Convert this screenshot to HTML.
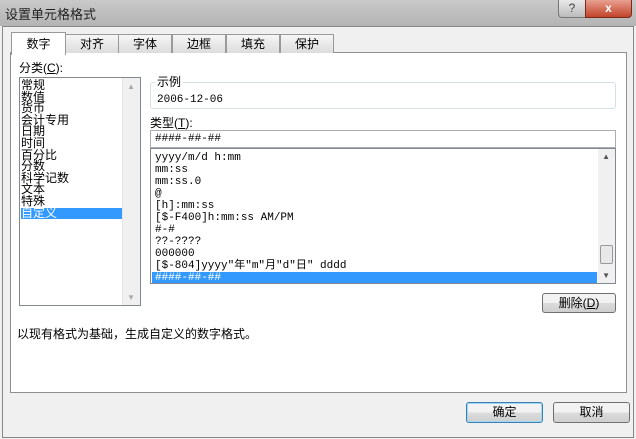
<!DOCTYPE html><html><head><meta charset="utf-8"><style>
body{margin:0;width:636px;height:439px;overflow:hidden;background:#f0f0f0;font-family:"Liberation Sans","Noto Sans CJK SC",sans-serif;font-size:12px;color:#000;position:relative}
.a{position:absolute}
.title{left:0;top:0;width:636px;height:26px;background:linear-gradient(#c9c9c9,#b4b4b4);}
.mono{font-family:"Liberation Mono","Noto Sans CJK SC",monospace;font-size:11px}
.tab{position:absolute;top:34px;height:18px;border:1px solid #999;border-bottom:none;background:linear-gradient(#f6f6f6,#dcdcdc);text-align:center;line-height:18px;font-size:12px}
.btn{position:absolute;border:1px solid #707070;border-radius:3px;background:linear-gradient(#f2f2f2 50%,#dcdcdc 50%,#cfcfcf);text-align:center;font-size:12px}
.lst div{padding-left:3px}
</style></head><body>
<div class="a title"></div>
<div class="a" style="left:5px;top:4px;font-size:13px;color:#222">设置单元格格式</div>
<div class="a" style="left:558px;top:0;width:26px;height:17px;border:1px solid #777;border-top:none;border-radius:0 0 0 4px;background:linear-gradient(#e8e8e8,#bbb);text-align:center;font-size:12px;color:#444;line-height:16px">?</div>
<div class="a" style="left:585px;top:0;width:45px;height:17px;border:1px solid #7a2a1a;border-top:none;border-radius:0 0 4px 0;background:linear-gradient(#e8a090,#c2442a);text-align:center;color:#fff;font-weight:bold;line-height:16px">x</div>
<div class="a" style="left:2px;top:26px;width:630px;height:410px;border:1px solid #888;background:#f0f0f0"></div>
<div class="a" style="left:10px;top:52px;width:615px;height:339px;border:1px solid #8e8e8e;background:#fff"></div>
<div class="tab" style="left:65px;width:52px">对齐</div>
<div class="tab" style="left:118px;width:52px">字体</div>
<div class="tab" style="left:172px;width:52px">边框</div>
<div class="tab" style="left:226px;width:52px">填充</div>
<div class="tab" style="left:280px;width:52px">保护</div>
<div class="tab" style="left:11px;top:32px;width:53px;height:22px;background:#fff;line-height:22px">数字</div>
<div class="a" style="left:19px;top:59px">分类(<u>C</u>):</div>
<div class="a" style="left:19px;top:77px;width:120px;height:227px;border:1px solid #828790;background:#fff;overflow:hidden">
<div class="a" style="right:0;top:0;width:17px;height:227px;background:#f0f0f0;border-left:1px solid #e4e4e4"></div>
<div class="a" style="right:5px;top:4px;font-size:8px;color:#aaa">▲</div>
<div class="a" style="right:5px;bottom:3px;font-size:8px;color:#aaa">▼</div>
<div class="a" style="left:1px;top:2px;line-height:11.6px;font-size:12px;width:101px">常规<br>数值<br>货币<br>会计专用<br>日期<br>时间<br>百分比<br>分数<br>科学记数<br>文本<br>特殊<br><div style="background:#3399ff;color:#fff">自定义</div></div>
</div>
<div class="a" style="left:150px;top:82px;width:464px;height:25px;border:1px solid #d5dfe5;border-radius:3px"></div>
<div class="a" style="left:155px;top:73px;background:#fff;padding:0 2px;font-size:12px">示例</div>
<div class="a mono" style="left:157px;top:94px">2006-12-06</div>
<div class="a" style="left:150px;top:114px">类型(<u>T</u>):</div>
<div class="a mono" style="left:150px;top:130px;width:460px;height:16px;border:1px solid #abadb3;padding-left:4px;line-height:16px">####-##-##</div>
<div class="a" style="left:150px;top:148px;width:464px;height:134px;border:1px solid #828790;background:#fff;overflow:hidden">
<div class="a" style="right:0;top:0;width:17px;height:134px;background:#f0f0f0"></div>
<div class="a" style="right:5px;top:3px;font-size:8px;color:#555">▲</div>
<div class="a" style="right:2px;top:96px;width:11px;height:17px;border:1px solid #999;border-radius:2px;background:#e8e8e8"></div>
<div class="a" style="right:5px;bottom:3px;font-size:8px;color:#555">▼</div>
<div class="a mono lst" style="left:1px;top:3px;width:445px;line-height:12px"><div>yyyy/m/d h:mm</div><div>mm:ss</div><div>mm:ss.0</div><div>@</div><div>[h]:mm:ss</div><div>[$-F400]h:mm:ss AM/PM</div><div>#-#</div><div>??-????</div><div>000000</div><div>[$-804]yyyy"年"m"月"d"日" dddd</div><div style="background:#3399ff;color:#fff">####-##-##</div></div>
</div>
<div class="btn" style="left:542px;top:293px;width:72px;height:18px;line-height:18px">删除(<u>D</u>)</div>
<div class="a" style="left:17px;top:325px">以现有格式为基础，生成自定义的数字格式。</div>
<div class="btn" style="left:466px;top:402px;width:75px;height:19px;line-height:19px;border-color:#3c7fb1;box-shadow:inset 0 0 0 1px #9fd8f5">确定</div>
<div class="btn" style="left:553px;top:402px;width:75px;height:19px;line-height:19px">取消</div>
</body></html>
